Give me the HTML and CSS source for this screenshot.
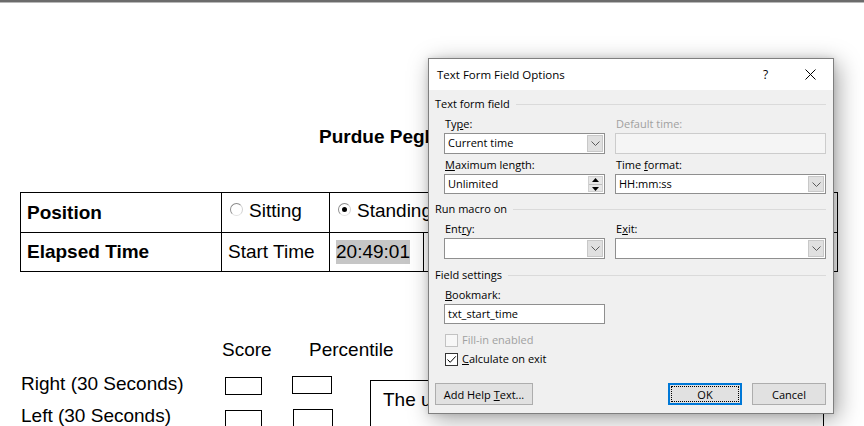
FILE: index.html
```html
<!DOCTYPE html>
<html>
<head>
<meta charset="utf-8">
<link rel="stylesheet" href="styles.css">
</head>
<body>
<div class="page">
  <div class="topbar"></div>
  <div class="doc">
    <h1 class="doc-title">Purdue Pegboard Test</h1>
    <table class="info">
      <colgroup><col class="c1"><col class="c2"><col class="c3"><col class="c4"><col class="c5"></colgroup>
      <tr class="r1">
        <th>Position</th>
        <td><span class="radio"></span>Sitting</td>
        <td colspan="3"><span class="radio on"></span>Standing</td>
      </tr>
      <tr class="r2">
        <th>Elapsed Time</th>
        <td>Start Time</td>
        <td><span class="hl">20:49:01</span></td>
        <td></td>
        <td></td>
      </tr>
    </table>
    <div class="score-head"><span class="sh-score">Score</span><span class="sh-pct">Percentile</span></div>
    <div class="score-grid">
      <div class="s-label">Right (30 Seconds)</div>
      <div class="s-cell"><span class="box b1"></span></div>
      <div class="s-cell"><span class="box b2"></span></div>
      <div class="note">The u</div>
      <div class="s-label">Left (30 Seconds)</div>
      <div class="s-cell"><span class="box b1 low"></span></div>
      <div class="s-cell"><span class="box b2 low"></span></div>
    </div>
  </div>

  <div class="dialog">
    <div class="dlg-titlebar">
      <span class="dlg-title">Text Form Field Options</span>
      <span class="dlg-help">?</span>
      <span class="dlg-close"><svg width="11" height="11" viewBox="0 0 11 11"><path d="M0.5 0.5 L10.5 10.5 M10.5 0.5 L0.5 10.5" stroke="#000" stroke-width="1" fill="none"/></svg></span>
    </div>
    <div class="dlg-body">
      <div class="group-label first"><span>Text form field</span><i class="sep"></i></div>
      <div class="fields">
        <div class="field">
          <div class="lbl">Ty<u>p</u>e:</div>
          <div class="ctrl combo h21"><span class="val">Current time</span><span class="drop"><svg width="9" height="5" viewBox="0 0 9 5"><path d="M0.5 0.5 L4.5 4.5 L8.5 0.5" fill="none" stroke="#5a5a5a"/></svg></span></div>
        </div>
        <div class="field">
          <div class="lbl dis">Default time:</div>
          <div class="ctrl disabled h21"></div>
        </div>
        <div class="field gap">
          <div class="lbl"><u>M</u>aximum length:</div>
          <div class="ctrl combo h20"><span class="val">Unlimited</span><span class="spin"><svg width="7" height="4" viewBox="0 0 7 4"><path d="M0 4 L3.5 0 L7 4 Z" fill="#000"/></svg><i class="spin-sep"></i><svg width="7" height="4" viewBox="0 0 7 4"><path d="M0 0 L3.5 4 L7 0 Z" fill="#000"/></svg></span></div>
        </div>
        <div class="field gap">
          <div class="lbl">Time <u>f</u>ormat:</div>
          <div class="ctrl combo h20"><span class="val">HH:mm:ss</span><span class="drop"><svg width="9" height="5" viewBox="0 0 9 5"><path d="M0.5 0.5 L4.5 4.5 L8.5 0.5" fill="none" stroke="#5a5a5a"/></svg></span></div>
        </div>
      </div>

      <div class="group-label g2"><span>Run macro on</span><i class="sep"></i></div>
      <div class="fields">
        <div class="field">
          <div class="lbl">Ent<u>r</u>y:</div>
          <div class="ctrl combo h21"><span class="val"></span><span class="drop"><svg width="9" height="5" viewBox="0 0 9 5"><path d="M0.5 0.5 L4.5 4.5 L8.5 0.5" fill="none" stroke="#5a5a5a"/></svg></span></div>
        </div>
        <div class="field">
          <div class="lbl">E<u>x</u>it:</div>
          <div class="ctrl combo h21"><span class="val"></span><span class="drop"><svg width="9" height="5" viewBox="0 0 9 5"><path d="M0.5 0.5 L4.5 4.5 L8.5 0.5" fill="none" stroke="#5a5a5a"/></svg></span></div>
        </div>
      </div>

      <div class="group-label g3"><span>Field settings</span><i class="sep"></i></div>
      <div class="fields single">
        <div class="field">
          <div class="lbl"><u>B</u>ookmark:</div>
          <div class="ctrl text h20"><span class="val">txt_start_time</span></div>
        </div>
      </div>
      <div class="check first-check"><span class="cb cb-dis"></span><span class="dis">Fill-in enabled</span></div>
      <div class="check second-check"><span class="cb"><svg width="11" height="11" viewBox="0 0 11 11"><path d="M1.5 5.5 L4.2 8.3 L9.8 2.3" fill="none" stroke="#000" stroke-width="1"/></svg></span><span><u>C</u>alculate on exit</span></div>

      <div class="buttons">
        <span class="btn help"><span>Add Help <u>T</u>ext...</span></span>
        <span class="spacer"></span>
        <span class="btn ok"><span class="focus">OK</span></span>
        <span class="btn cancel">Cancel</span>
      </div>
    </div>
  </div>
</div>
</body>
</html>
```

FILE: styles.css
```css
* { box-sizing: border-box; }
html, body { margin: 0; padding: 0; background: #fff; }
body { width: 864px; height: 426px; overflow: hidden; font-family: "Liberation Sans", Arial, sans-serif; color: #000; }

.page { position: relative; width: 864px; height: 426px; overflow: hidden; }
.topbar { height: 3px; background: linear-gradient(#6b6b6b 0, #6b6b6b 2px, #b8b8b8 2px, #b8b8b8 3px); }

.doc-title { margin: 123px 0 0 319px; font-size: 19px; line-height: 22px; font-weight: bold; white-space: nowrap; }

.info { margin: 44px 0 0 20px; border-collapse: collapse; table-layout: fixed; width: 817px; font-size: 19px; }
.info col.c1 { width: 201px; }
.info col.c2 { width: 108px; }
.info col.c3 { width: 94px; }
.info col.c4 { width: 206px; }
.info col.c5 { width: 208px; }
.info th, .info td { border: 1px solid #000; padding: 0 6px; text-align: left; vertical-align: middle; white-space: nowrap; overflow: hidden; }
.info th { font-weight: bold; }
.info .r1 { height: 40px; }
.info .r2 { height: 39px; }
.info .r1 td { padding-bottom: 4px; }

.radio { display: inline-block; position: relative; width: 13px; height: 13px; border-radius: 50%; border: 1px solid; border-color: #8c8c8c #d2d2d2 #e2e2e2 #8c8c8c; background: #fff; margin: 0 6px 0 2px; vertical-align: 1px; }
.radio.on::after { content: ""; position: absolute; left: 3px; top: 3px; width: 5px; height: 5px; border-radius: 50%; background: #000; }

.hl { display: inline-block; background: #c6c6c6; line-height: 24px; }

.score-head { margin: 67px 0 0 222px; height: 22px; line-height: 22px; font-size: 19px; display: flex; }
.sh-score { width: 87px; }

.score-grid { margin-top: 7px; padding-left: 21px; display: grid; grid-template-columns: 204px 67px 78px 454px; grid-template-rows: 32px 32px; font-size: 19px; }
.s-label { line-height: 32px; white-space: nowrap; }
.box { display: block; border: 1px solid #000; height: 18px; }
.box.b1 { width: 37px; margin-top: 9px; }
.box.b2 { width: 40px; margin-top: 8px; }
.box.b1.low { margin-top: 10px; }
.box.b2.low { margin-top: 9px; width: 40px; margin-left: 1px; }
.note { grid-column: 4; grid-row: 1 / span 2; margin-top: 12px; height: 90px; border: 1px solid #000; padding: 8px 0 0 12px; line-height: 22px; }

/* dialog */
.dialog { position: absolute; left: 428px; top: 58px; width: 406px; height: 356px; border: 1px solid #7f7f7f; background: #f0f0f0; box-shadow: 4px 5px 22px rgba(0,0,0,0.36), 0 0 6px rgba(0,0,0,0.12); font-family: "Open Sans", "Noto Sans", sans-serif; font-size: 11px; color: #000; }
.dlg-titlebar { height: 31px; background: #fff; display: flex; align-items: center; padding-left: 8px; }
.dlg-title { flex: 1; font-size: 11.5px; }
.dlg-help { width: 42px; font-size: 12px; }
.dlg-close { width: 28px; display: flex; align-items: center; }

.dlg-body { padding: 0 7px 0 6px; }
.group-label { display: flex; align-items: center; height: 16px; line-height: 16px; }
.group-label.first { margin-top: 6px; }
.group-label.g2 { margin-top: 7px; }
.group-label.g3 { margin-top: 8px; }
.group-label .sep { flex: 1; height: 1px; background: #dadada; margin-left: 6px; }

.fields { margin-left: 9px; display: grid; grid-template-columns: 161px 211px; column-gap: 10px; }
.field .lbl { margin-top: 4px; height: 16px; line-height: 16px; padding-left: 1px; white-space: nowrap; }
.field.gap .lbl { margin-top: 3px; }
.lbl.dis, .dis { color: #a0a0a0; }

.ctrl { margin-top: 1px; border: 1px solid #8f8f8f; background: #fff; display: flex; }
.ctrl.h21 { height: 21px; }
.ctrl.h20 { height: 20px; }
.ctrl.disabled { border-color: #cccccc; background: #f5f5f5; }
.ctrl .val { flex: 1; padding-left: 3px; line-height: 18px; white-space: nowrap; }
.ctrl .drop { width: 16px; margin: 1px; background: #e0e0e0; border: 1px solid #c8c8c8; display: flex; align-items: center; justify-content: center; }
.ctrl .spin { width: 15px; margin: 1px; background: #e6e6e6; border: 1px solid #d0d0d0; display: flex; flex-direction: column; align-items: center; justify-content: center; gap: 2px; }
.spin-sep { width: 100%; height: 1px; background: #bdbdbd; }

.check { display: flex; align-items: center; height: 16px; line-height: 16px; margin-left: 10px; }
.first-check { margin-top: 8px; }
.second-check { margin-top: 3px; }
.cb { width: 13px; height: 13px; border: 1px solid #333; background: #fff; margin-right: 4px; display: flex; align-items: center; justify-content: center; }
.cb-dis { border-color: #c2c2c2; background: #f7f7f7; }

.buttons { display: flex; margin-top: 16px; height: 22px; }
.spacer { flex: 1; }
.btn { height: 22px; border: 1px solid #adadad; background: #e1e1e1; display: flex; align-items: center; justify-content: center; white-space: nowrap; }
.btn.help { width: 98px; }
.btn.ok { width: 74px; border: 2px solid #0078d7; padding: 1px; }
.btn.ok .focus { flex: 1; align-self: stretch; border: 1px dotted #000; display: flex; align-items: center; justify-content: center; }
.btn.cancel { width: 74px; margin-left: 10px; }
```
